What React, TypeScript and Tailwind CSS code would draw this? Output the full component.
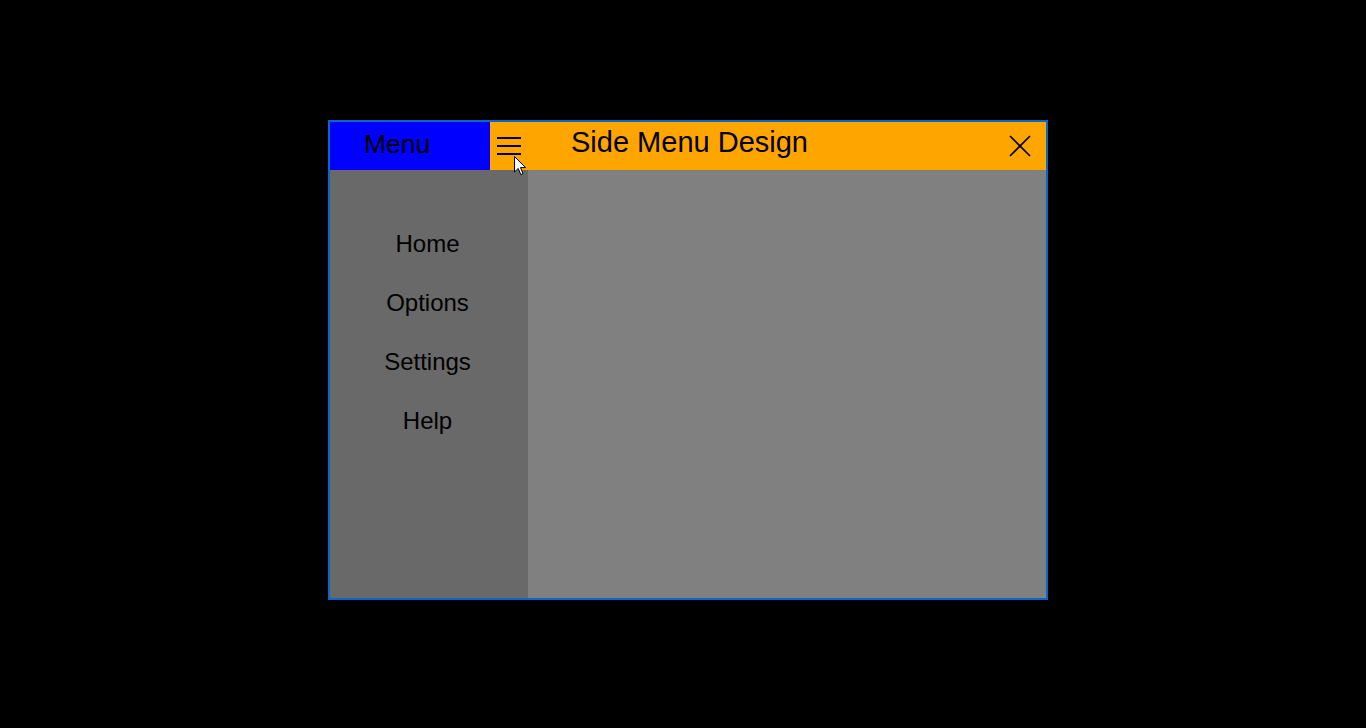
const items = ["Home", "Options", "Settings", "Help"];

const Cursor = () => (
    <svg className="absolute left-[514px] top-[156px]" width="13" height="20" viewBox="0 0 13 20">
        <path d="M0.5 0.5 L0.5 16 L4.2 12.4 L6.8 18.6 L9 17.6 L6.5 11.6 L11.6 11.6 Z" fill="#fff" stroke="#000"
              strokeWidth="1" strokeLinejoin="miter"/>
    </svg>
);

const CloseIcon = () => (
    <svg width="22" height="22" viewBox="0 0 22 22" fill="none" stroke="#000" strokeWidth="1.7">
        <path d="M1 1 L21 21 M21 1 L1 21"/>
    </svg>
);

export default function App() {
    return (
        <div className="relative min-h-screen w-full bg-black pt-[120px] pl-[328px] font-['Liberation_Sans',Arial,sans-serif] text-black">
            <div className="flex h-[480px] w-[720px] flex-col border-2 border-[#0a66c8]">
                <header className="flex h-[48px] shrink-0">
                    <div className="w-[160px] bg-[#0000ff] pl-[34px] pt-[9px] text-[26.5px] leading-none">Menu</div>
                    <div className="flex flex-1 bg-[#ffa500]">
                        <button className="ml-[7px] mt-[15px] flex h-[18px] w-[24px] flex-col justify-between">
                            <span className="block h-[2px] w-full bg-black"/>
                            <span className="block h-[2px] w-full bg-black"/>
                            <span className="block h-[2px] w-full bg-black"/>
                        </button>
                        <h1 className="ml-[50px] mt-[6px] text-[29px] leading-none">Side Menu Design</h1>
                        <button className="ml-auto mr-[15px] mt-[13px] self-start">
                            <CloseIcon/>
                        </button>
                    </div>
                </header>
                <div className="flex flex-1">
                    <nav className="w-[198px] bg-[#696969] pt-[44px] pr-[3px]">
                        {items.map((item) => (
                            <div key={item} className="h-[59px] text-center text-[24px] leading-[59px]">{item}</div>
                        ))}
                    </nav>
                    <main className="flex-1 bg-[#808080]"/>
                </div>
            </div>
            <Cursor/>
        </div>
    );
}
